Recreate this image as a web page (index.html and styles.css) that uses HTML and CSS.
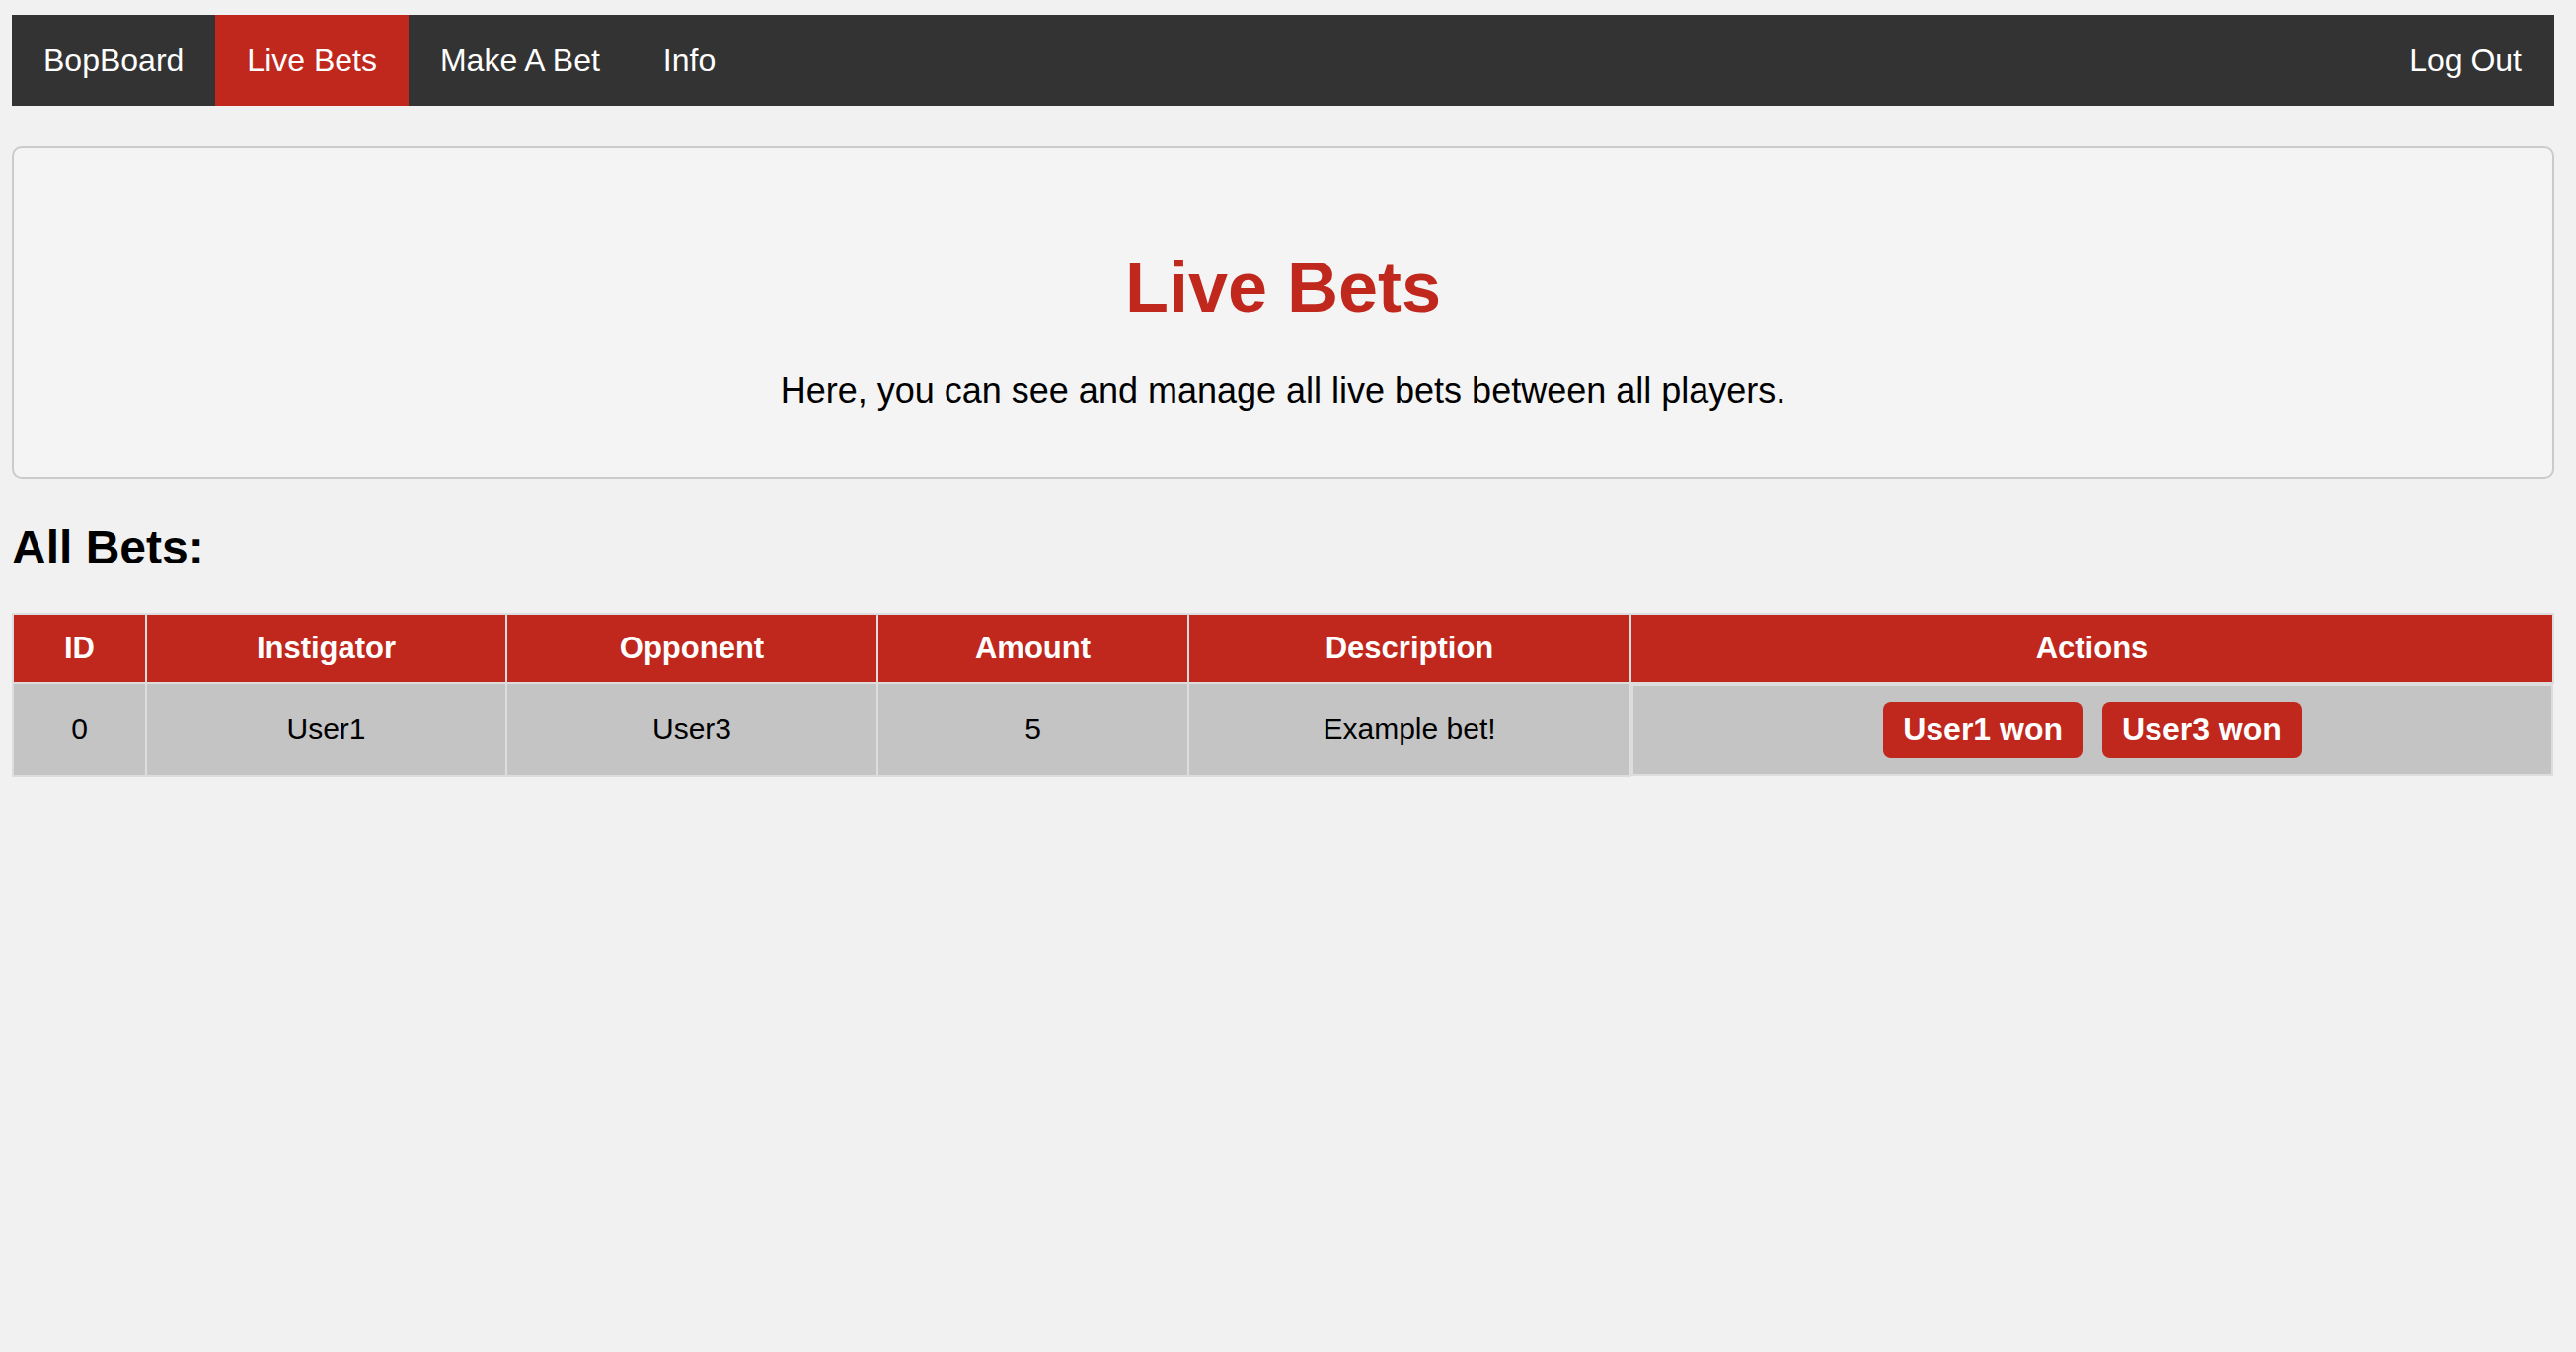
FILE: index.html
```html
<!DOCTYPE html>
<html lang="en">
<head>
  <meta charset="UTF-8" />
  <meta name="viewport" content="width=device-width, initial-scale=1.0"/>
  <title>BopBoard - Live Bets</title>
  <link rel="stylesheet" href="styles.css">
</head>
<body>
  <!-- Top navigation -->
  <div class="navbar">
    <a href="#">BopBoard</a>
    <a href="#" class="active">Live Bets</a>
    <a href="#">Make A Bet</a>
    <a href="#">Info</a>
    <a href="#" class="right">Log Out</a>
  </div>

  <!-- Page header -->
  <div class="hero">
    <h1>Live Bets</h1>
    <p>Here, you can see and manage all live bets between all players.</p>
  </div>

  <h2>All Bets:</h2>

  <table class="bets">
    <thead>
      <tr>
        <th class="col-id">ID</th>
        <th class="col-inst">Instigator</th>
        <th class="col-opp">Opponent</th>
        <th class="col-amount">Amount</th>
        <th class="col-desc">Description</th>
        <th>Actions</th>
      </tr>
    </thead>
    <tbody>
      <tr>
        <td>0</td>
        <td>User1</td>
        <td>User3</td>
        <td>5</td>
        <td>Example bet!</td>
        <td class="actions">
          <button>User1 won</button>
          <button>User3 won</button>
        </td>
      </tr>
    </tbody>
  </table>
</body>
</html>
```

FILE: styles.css
```css
/* Base */
body {
  font-family: "Liberation Sans", Arial, Helvetica, sans-serif;
  background-color: #f1f1f1;
  margin: 15px 22px 0 12px;
  font-size: 30px;
}

/* Navigation bar */
.navbar {
  display: flex;
  background-color: #333;
}

.navbar a {
  color: white;
  text-decoration: none;
  font-size: 32px;
  line-height: 38px;
  padding: 27px 32px;
}
.navbar a:hover {
  background-color: #444;
}

.navbar a.active {
  background-color: #c0271d;
}

.navbar a.right {
  margin-left: auto;
  padding-right: 33px;
}

/* Header box */
.hero {
  margin-top: 41px;
  padding: 50px 40px;
  background-color: #f4f4f4;
  border: 2px solid #cbcbcb;
  border-radius: 10px;
  text-align: center;
}

.hero h1 {
  margin: 50px 0 0;
  font-size: 72px;
  color: #c0271d;
}

.hero p {
  margin: 43px 0 16px;
  font-size: 36px;
}

h2 {
  font-size: 48px;
  margin: 42px 0 39px;
}

/* Bets table */
.bets {
  width: 100%;
  border-collapse: collapse;
  table-layout: fixed;
}

.bets th,
.bets td {
  box-sizing: border-box;
  border: 2px solid #ddd;
  text-align: center;
}

.bets th {
  background-color: #c0271d;
  color: white;
  font-size: 31px;
  padding: 16px 8px;
}

.bets td {
  background-color: #c4c4c4;
  padding: 16px 8px;
}

.col-id { width: 135px; }
.col-inst { width: 365px; }
.col-opp { width: 376px; }
.col-amount { width: 315px; }
.col-desc { width: 448px; }

.bets td.actions {
  display: flex;
  justify-content: center;
  gap: 20px;
}

.actions button {
  background-color: #c0271d;
  color: white;
  border: none;
  border-radius: 8px;
  font-family: "Liberation Sans", Arial, sans-serif;
  font-weight: bold;
  font-size: 32px;
  padding: 10px 20px;
  cursor: pointer;
}
.actions button:hover {
  background-color: #a01f17;
}
```
